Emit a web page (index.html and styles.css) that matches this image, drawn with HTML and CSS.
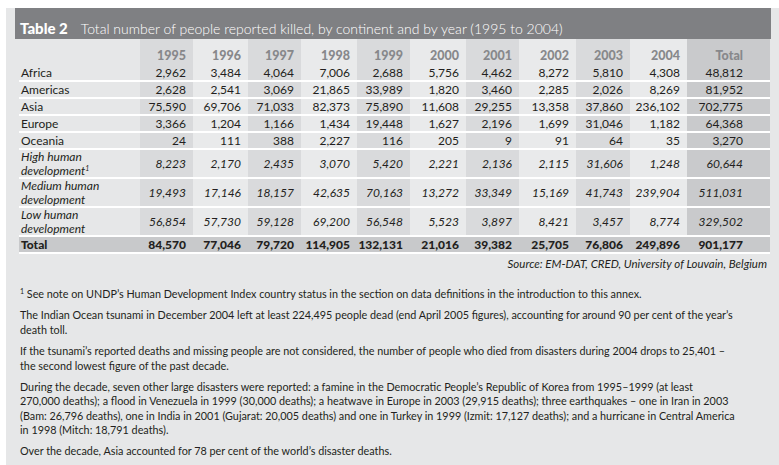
FILE: index.html
```html
<!DOCTYPE html>
<html>
<head>
<meta charset="utf-8">
<link rel="stylesheet" href="styles.css">
</head>
<body>
<div class="panel">
  <div class="title"><span class="tnum">Table 2</span><span class="ttext">Total number of people reported killed, by continent and by year (1995 to 2004)</span></div>
  <div class="content">
    <table class="data">
      <colgroup>
        <col class="c-label"><col class="c-d w53"><col class="c-l w55"><col class="c-d w53"><col class="c-l w56"><col class="c-d w53"><col class="c-l w56"><col class="c-d w53"><col class="c-l w57"><col class="c-d w54"><col class="c-l w57"><col class="c-t">
      </colgroup>
      <thead>
        <tr><th></th><th>1995</th><th>1996</th><th>1997</th><th>1998</th><th>1999</th><th>2000</th><th>2001</th><th>2002</th><th>2003</th><th>2004</th><th class="tot">Total</th></tr>
      </thead>
      <tbody>
        <tr><td>Africa</td><td>2,962</td><td>3,484</td><td>4,064</td><td>7,006</td><td>2,688</td><td>5,756</td><td>4,462</td><td>8,272</td><td>5,810</td><td>4,308</td><td class="tot">48,812</td></tr>
        <tr><td>Americas</td><td>2,628</td><td>2,541</td><td>3,069</td><td>21,865</td><td>33,989</td><td>1,820</td><td>3,460</td><td>2,285</td><td>2,026</td><td>8,269</td><td class="tot">81,952</td></tr>
        <tr><td>Asia</td><td>75,590</td><td>69,706</td><td>71,033</td><td>82,373</td><td>75,890</td><td>11,608</td><td>29,255</td><td>13,358</td><td>37,860</td><td>236,102</td><td class="tot">702,775</td></tr>
        <tr><td>Europe</td><td>3,366</td><td>1,204</td><td>1,166</td><td>1,434</td><td>19,448</td><td>1,627</td><td>2,196</td><td>1,699</td><td>31,046</td><td>1,182</td><td class="tot">64,368</td></tr>
        <tr><td>Oceania</td><td>24</td><td>111</td><td>388</td><td>2,227</td><td>116</td><td>205</td><td>9</td><td>91</td><td>64</td><td>35</td><td class="tot">3,270</td></tr>
        <tr class="hd"><td>High human<br>development<sup>1</sup></td><td>8,223</td><td>2,170</td><td>2,435</td><td>3,070</td><td>5,420</td><td>2,221</td><td>2,136</td><td>2,115</td><td>31,606</td><td>1,248</td><td class="tot">60,644</td></tr>
        <tr class="hd"><td>Medium human<br>development</td><td>19,493</td><td>17,146</td><td>18,157</td><td>42,635</td><td>70,163</td><td>13,272</td><td>33,349</td><td>15,169</td><td>41,743</td><td>239,904</td><td class="tot">511,031</td></tr>
        <tr class="hd"><td>Low human<br>development</td><td>56,854</td><td>57,730</td><td>59,128</td><td>69,200</td><td>56,548</td><td>5,523</td><td>3,897</td><td>8,421</td><td>3,457</td><td>8,774</td><td class="tot">329,502</td></tr>
        <tr class="total"><td>Total</td><td>84,570</td><td>77,046</td><td>79,720</td><td>114,905</td><td>132,131</td><td>21,016</td><td>39,382</td><td>25,705</td><td>76,806</td><td>249,896</td><td class="tot">901,177</td></tr>
      </tbody>
    </table>
    <p class="source">Source: EM-DAT, CRED, University of Louvain, Belgium</p>
    <div class="notes">
      <p><sup>1</sup> See note on UNDP’s Human Development Index country status in the section on data definitions in the introduction to this annex.</p>
      <p>The Indian Ocean tsunami in December 2004 left at least 224,495 people dead (end April 2005 figures), accounting for around 90 per cent of the year’s<br>death toll.</p>
      <p>If the tsunami’s reported deaths and missing people are not considered, the number of people who died from disasters during 2004 drops to 25,401 –<br>the second lowest figure of the past decade.</p>
      <p>During the decade, seven other large disasters were reported: a famine in the Democratic People’s Republic of Korea from 1995–1999 (at least<br>270,000 deaths); a flood in Venezuela in 1999 (30,000 deaths); a heatwave in Europe in 2003 (29,915 deaths); three earthquakes – one in Iran in 2003<br>(Bam: 26,796 deaths), one in India in 2001 (Gujarat: 20,005 deaths) and one in Turkey in 1999 (Izmit: 17,127 deaths); and a hurricane in Central America<br>in 1998 (Mitch: 18,791 deaths).</p>
      <p>Over the decade, Asia accounted for 78 per cent of the world’s disaster deaths.</p>
    </div>
  </div>
</div>
</body>
</html>
```
FILE: styles.css
```css
html, body {
  margin: 0;
  padding: 0;
  background: #ffffff;
}
body {
  font-family: "Lato", "Liberation Sans", sans-serif;
  color: #231f20;
  width: 779px;
  height: 465px;
  overflow: hidden;
}
.panel {
  margin: 8px 0 0 6px;
  background: #e6e7e8;
  height: 457px;
}
.title {
  margin: 0 8px 0 9px;
  height: 31px;
  box-sizing: border-box;
  padding: 11px 0 0 5px;
  background: #7f8083;
  color: #ffffff;
  line-height: 18px;
  white-space: nowrap;
}
.tnum {
  font-size: 15px;
  font-weight: 900;
  margin-right: 13px;
}
.ttext {
  font-size: 14px;
  font-weight: 300;
}
.content {
  padding: 0 0 0 13px;
}
.data {
  border-collapse: collapse;
  table-layout: fixed;
  width: 751px;
  font-size: 12px;
}
.c-label { width: 121px; }
.w53 { width: 53px; }
.w54 { width: 54px; }
.w55 { width: 55px; }
.w56 { width: 56px; }
.w57 { width: 57px; }
.c-t { width: 83px; background: #c9cacc; }
.c-d { background: #d9dadc; }
.c-l { background: #e9eaeb; }
.data th {
  height: 25px;
  padding: 8px 7px 0 0;
  box-sizing: border-box;
  text-align: right;
  font-weight: 900;
  color: #87888b;
  font-size: 12.5px;
  line-height: 15px;
}
.data th.tot { padding-right: 27px; }
.data td {
  text-align: right;
  padding: 0 7px 0 0;
  height: 15px;
  line-height: 15px;
  border-bottom: 2px solid #ffffff;
  white-space: nowrap;
}
.data td:first-child {
  text-align: left;
  padding-left: 2px;
}
.data td.tot { padding-right: 27px; }
.data tbody tr:first-child td { height: 16px; }
.data tr.hd td {
  font-style: italic;
  height: 27px;
  line-height: 13.5px;
}
.data sup {
  font-size: 7px;
  line-height: 0;
  vertical-align: 4px;
}
.data tr.total td {
  background: #c8c9cb;
  font-weight: 900;
  height: 15px;
}
.source {
  margin: 2px 0 0 0;
  width: 748px;
  text-align: right;
  font-style: italic;
  font-size: 11.5px;
  line-height: 16px;
}
.notes {
  margin-top: 15px;
  padding-left: 1px;
  font-size: 10.8px;
  line-height: 14.3px;
}
.notes p {
  margin: 0 0 7.2px 0;
  white-space: nowrap;
}
.notes sup {
  font-size: 7px;
  line-height: 0;
  vertical-align: 4px;
}
```
